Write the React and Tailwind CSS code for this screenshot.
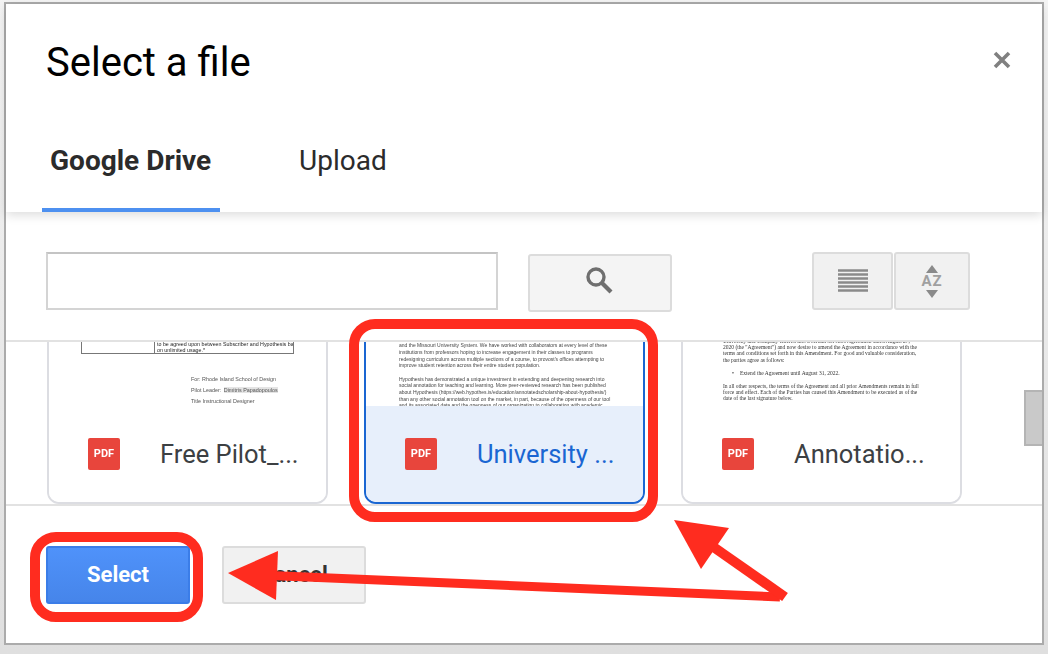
import React from 'react';

const roboto = { fontFamily: 'Roboto, sans-serif' };

const PdfIcon = () => (
    <div className="w-[32px] h-[32px] shrink-0 rounded-[2px] bg-[#e8453c] flex items-center justify-center text-white text-[11px] font-bold blur-[0.4px] font-['Roboto',sans-serif]">
        PDF
    </div>
);

const FileCard = ({ name, selected, children }) => (
    <div className={`w-[281px] h-[300px] shrink-0 flex flex-col rounded-b-[12px] border-2 overflow-hidden ${selected ? 'border-[#1a66d2]' : 'border-[#dcdde2]'}`}>
        <div className="flex-1 bg-white overflow-hidden flex flex-col justify-end">{children}</div>
        <div className={`h-[96px] shrink-0 flex items-center gap-[40px] pl-[39px] text-[25.5px] ${selected ? 'bg-[#e7effb] text-[#1a66d2]' : 'bg-white text-[#3c4043]'}`}>
            <PdfIcon />
            <span className="whitespace-nowrap">{name}</span>
        </div>
    </div>
);

const App = () => {
    return (
        <div className="relative w-[1048px] h-[654px] overflow-hidden bg-linear-to-b from-[#f4f4f4] to-[#dfdfdf] pt-[2px] pl-[4px]" style={roboto}>
            <div className="w-[1040px] h-[643px] border-2 border-[#ababab] bg-white flex flex-col">
                <header className="relative z-10 h-[208px] shrink-0 bg-white shadow-[0_3px_10px_rgba(0,0,0,0.14)] pl-[41px]">
                    <div className="flex items-start justify-between">
                        <h1 className="mt-[34px] -ml-[1px] text-[40px] leading-[50px] text-black">Select a file</h1>
                        <svg className="mt-[46px] mr-[30px]" width="20" height="20" viewBox="0 0 20 20">
                            <path d="M3 3 L17 17 M17 3 L3 17" stroke="#808080" strokeWidth="3.6" fill="none" />
                        </svg>
                    </div>
                    <div className="absolute left-[36px] bottom-0 flex">
                        <div className="w-[178px] h-[69px] pl-[8px] border-b-4 border-[#4d90f0] text-[28px] leading-[36px] font-bold text-[#2b2b2b]">Google Drive</div>
                        <div className="ml-[79px] text-[28px] leading-[36px] text-[#2b2b2b]">Upload</div>
                    </div>
                </header>

                <div className="h-[130px] shrink-0 flex items-start pl-[40px] pt-[40px] border-b-2 border-[#e2e2e2]">
                    <div className="w-[452px] h-[58px] border-2 border-[#d4d4d4] border-t-[#c4c4c4] bg-white"></div>
                    <button className="ml-[30px] mt-[2px] w-[144px] h-[58px] rounded-[3px] border-2 border-[#dcdcdc] bg-[#f4f4f4] flex items-center justify-center pr-[3px] pb-[5px]">
                        <svg width="32" height="32" viewBox="0 0 32 32">
                            <circle cx="13" cy="12" r="8" stroke="#6f6f6f" strokeWidth="3.4" fill="none" />
                            <path d="M19 18 L28 27" stroke="#6f6f6f" strokeWidth="4.2" fill="none" />
                        </svg>
                    </button>
                    <button className="ml-[140px] w-[81px] h-[58px] rounded-[3px] border-2 border-[#dcdcdc] bg-[#f1f1f1] flex items-center justify-center">
                        <svg width="30" height="24" viewBox="0 0 30 24">
                            <path d="M0 1.5 H30 M0 5.5 H30 M0 9.5 H30 M0 13.5 H30 M0 17.5 H30 M0 21.5 H30" stroke="#8a8a8a" strokeWidth="2.4" fill="none" />
                        </svg>
                    </button>
                    <button className="ml-[1px] w-[76px] h-[58px] rounded-[3px] border-2 border-[#dcdcdc] bg-[#f1f1f1] flex flex-col items-center justify-center">
                        <svg width="12" height="8" viewBox="0 0 12 8"><path d="M6 0 L12 8 H0 Z" fill="#8a8a8a" /></svg>
                        <span className="text-[15px] leading-[17px] font-bold text-[#a0a0a0] tracking-[1px]">AZ</span>
                        <svg width="12" height="8" viewBox="0 0 12 8"><path d="M0 0 H12 L6 8 Z" fill="#8a8a8a" /></svg>
                    </button>
                </div>

                <div className="h-[164px] shrink-0 flex items-end justify-between overflow-hidden pl-[41px] border-b-2 border-[#e2e2e2]">
                    <div className="flex items-end gap-[36px]">
                        <FileCard name="Free Pilot_...">
                            <div className="-mb-[1px] font-['Liberation_Sans',sans-serif] blur-[0.3px]">
                                <div className="ml-[32px] w-[213px] h-[60px] border border-[#777777] flex justify-end">
                                    <div className="w-[139px] border-l border-[#777777] flex flex-col justify-end pl-[2px] text-[5.3px] leading-[5.5px] font-medium text-[#222222] whitespace-nowrap overflow-hidden">
                                        <div>to be agreed upon between Subscriber and Hypothesis based</div>
                                        <div>on unlimited usage.*</div>
                                    </div>
                                </div>
                                <div className="mt-[20px] ml-[142px] text-[5.4px] leading-[11px] text-[#555555] whitespace-nowrap">
                                    <div>For: Rhode Island School of Design</div>
                                    <div>Pilot Leader: <span className="ml-[1px] bg-[#e4e4e4]">Dimitris Papadopoulos</span></div>
                                    <div>Title Instructional Designer</div>
                                </div>
                            </div>
                        </FileCard>
                        <FileCard name="University ..." selected>
                            <div className="h-[200px] overflow-hidden flex flex-col justify-end font-['Liberation_Sans',sans-serif] blur-[0.3px]">
                                <div className="ml-[33px] -mb-[3px] text-[5px] leading-[6.67px] text-[#444444] whitespace-nowrap">
                                    <div>and the Missouri University System. We have worked with collaborators at every level of these</div>
                                    <div>institutions from professors hoping to increase engagement in their classes to programs</div>
                                    <div>redesigning curriculum across multiple sections of a course, to provost's offices attempting to</div>
                                    <div>improve student retention across their entire student population.</div>
                                    <div className="h-[6.67px]"></div>
                                    <div>Hypothesis has demonstrated a unique investment in extending and deepening research into</div>
                                    <div>social annotation for teaching and learning. More peer-reviewed research has been published</div>
                                    <div>about Hypothesis (https://web.hypothes.is/education/annotatedscholarship-about-hypothesis/)</div>
                                    <div>than any other social annotation tool on the market, in part, because of the openness of our tool</div>
                                    <div>and its associated data and the openness of our organization to collaboration with academic</div>
                                </div>
                            </div>
                        </FileCard>
                        <FileCard name="Annotatio...">
                            <div className="ml-[40px] mb-[5px] font-['Liberation_Serif',serif] text-[5.5px] leading-[6.1px] text-[#333333] whitespace-nowrap blur-[0.3px]">
                                <div>University and Company entered into a certain Services Agreement dated August 27,</div>
                                <div>2020 (the "Agreement") and now desire to amend the Agreement in accordance with the</div>
                                <div>terms and conditions set forth in this Amendment. For good and valuable consideration,</div>
                                <div>the parties agree as follows:</div>
                                <div className="mt-[7px] ml-[9px]">•<span className="ml-[6px]">Extend the Agreement until August 31, 2022.</span></div>
                                <div className="mt-[7px]">In all other respects, the terms of the Agreement and all prior Amendments remain in full</div>
                                <div>force and effect. Each of the Parties has caused this Amendment to be executed as of the</div>
                                <div>date of the last signature below.</div>
                            </div>
                        </FileCard>
                    </div>
                    <div className="w-[18px] h-full shrink-0 pt-[48px]">
                        <div className="h-[56px] bg-[#c9c9c9] border-2 border-r-0 border-[#b4b4b4]"></div>
                    </div>
                </div>

                <div className="flex-1 flex items-start gap-[32px] pl-[40px] pt-[40px]">
                    <button className="w-[144px] h-[58px] pb-[2px] rounded-[3px] border-2 border-[#3b7de8] bg-linear-to-b from-[#4f92fa] to-[#4685ea] text-white text-[22px] font-bold">Select</button>
                    <button className="w-[144px] h-[58px] pb-[2px] rounded-[3px] border-2 border-[#dcdcdc] bg-[#f1f1f1] text-[#333333] text-[22px] font-bold">Cancel</button>
                </div>
            </div>

            {/* red annotations drawn over the dialog */}
            <div className="absolute left-[349px] top-[319px] w-[309px] h-[203px] rounded-[26px] border-[10px] border-[#ff2c1f]"></div>
            <div className="absolute left-[30px] top-[532px] w-[173px] h-[90px] rounded-[26px] border-[10px] border-[#ff2c1f]"></div>
            <svg className="absolute left-0 top-0" width="1048" height="654" viewBox="0 0 1048 654">
                <path d="M270 575.5 L780 597" stroke="#ff2c1f" strokeWidth="9" fill="none" />
                <path d="M228 573 L278 551 L276 600 Z" fill="#ff2c1f" />
                <path d="M785 597 L712 546" stroke="#ff2c1f" strokeWidth="10" fill="none" />
                <path d="M674 520 L729 528 L701 569 Z" fill="#ff2c1f" />
            </svg>
        </div>
    );
};

export default App;
